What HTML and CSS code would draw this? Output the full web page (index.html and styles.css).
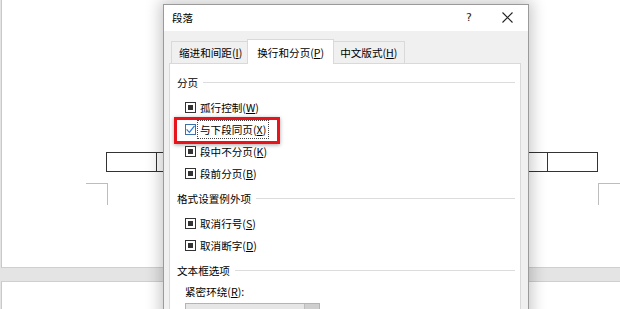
FILE: index.html
```html
<!DOCTYPE html>
<html lang="zh-CN">
<head>
<meta charset="utf-8">
<title>段落</title>
<link rel="stylesheet" href="styles.css">
</head>
<body>
<div class="desk">
  <div class="page page-one">
    <div class="doc-table">
      <div class="cell cell-a"></div>
      <div class="cell cell-b"></div>
      <div class="cell cell-c"></div>
    </div>
    <span class="crop crop-left"></span>
    <span class="crop crop-right"></span>
  </div>
  <div class="page-gap"></div>
  <div class="page page-two"></div>

  <div class="dialog">
    <div class="titlebar">
      <span class="title">段落</span>
      <span class="help">?</span>
      <span class="close">
        <svg width="11" height="11" viewBox="0 0 11 11"><path d="M0.5 0.5 L10.5 10.5 M10.5 0.5 L0.5 10.5" stroke="#222" stroke-width="1.1" fill="none"/></svg>
      </span>
    </div>
    <div class="dbody">
      <div class="tabs">
        <div class="tab">缩进和间距(<u>I</u>)</div>
        <div class="tab active">换行和分页(<u>P</u>)</div>
        <div class="tab">中文版式(<u>H</u>)</div>
      </div>
      <div class="panel">
        <div class="group-title"><span>分页</span><i class="rule"></i></div>
        <div class="row"><span class="cb mixed"></span><span class="lbl">孤行控制(<u>W</u>)</span></div>
        <div class="row checked-row">
          <span class="cb checked">
            <svg width="9" height="9" viewBox="0 0 9 9"><path d="M0.6 4.4 L3.4 7.3 L8.5 0.9" stroke="#2a78d4" stroke-width="1.2" fill="none"/></svg>
          </span>
          <span class="lbl focus">与下段同页(<u>X</u>)</span>
          <span class="mark"></span>
        </div>
        <div class="row"><span class="cb mixed"></span><span class="lbl">段中不分页(<u>K</u>)</span></div>
        <div class="row"><span class="cb mixed"></span><span class="lbl">段前分页(<u>B</u>)</span></div>

        <div class="group-title next"><span>格式设置例外项</span><i class="rule"></i></div>
        <div class="row"><span class="cb mixed"></span><span class="lbl">取消行号(<u>S</u>)</span></div>
        <div class="row"><span class="cb mixed"></span><span class="lbl">取消断字(<u>D</u>)</span></div>

        <div class="group-title next"><span>文本框选项</span><i class="rule"></i></div>
        <div class="field-label">紧密环绕(<u>R</u>):</div>
        <div class="combo"><span class="combo-text"></span><span class="combo-btn"></span></div>
      </div>
    </div>
  </div>
</div>
</body>
</html>
```

FILE: styles.css
```css
* { box-sizing: border-box; }
html, body { margin: 0; padding: 0; }
body {
  width: 620px;
  height: 309px;
  overflow: hidden;
  background: #e4e4e4;
  font-family: "Noto Sans CJK SC", "Noto Sans", sans-serif;
  font-size: 10.6px;
  color: #000;
}
.desk {
  position: relative;
  width: 620px;
  height: 309px;
}
.page {
  background: #fff;
  margin-left: 1px;
  border-left: 1px solid #c9c9c9;
}
.page-one {
  position: relative;
  height: 268px;
  border-bottom: 1px solid #cfcfcf;
  padding-top: 152px;
}
.page-gap { height: 13px; }
.page-two {
  height: 28px;
  border-top: 1px solid #cfcfcf;
}
.doc-table {
  display: flex;
  margin-left: 104px;
  width: 492px;
  height: 20px;
  border: 1px solid #333;
}
.cell { height: 100%; }
.cell-a { width: 50px; border-right: 1px solid #333; }
.cell-b { flex: 1; border-right: 1px solid #333; }
.cell-c { width: 49px; }
.crop {
  position: absolute;
  top: 183px;
  width: 22px;
  height: 22px;
  border-top: 1px solid #bdbdbd;
}
.crop-left { left: 84px; border-right: 1px solid #bdbdbd; }
.crop-right { left: 596px; border-left: 1px solid #bdbdbd; }

.dialog {
  position: absolute;
  left: 163px;
  top: 4px;
  width: 366px;
  height: 320px;
  background: #f0f0f0;
  border: 1px solid #9a9a9a;
  box-shadow: 0 0 14px 3px rgba(0, 0, 0, 0.22);
}
.titlebar {
  display: flex;
  align-items: center;
  height: 26px;
  background: #fff;
  padding-left: 8px;
  padding-bottom: 1px;
}
.title { flex: 1; }
.help {
  width: 14px;
  text-align: center;
  font-family: "DejaVu Sans", sans-serif;
  font-size: 11px;
  color: #222;
  margin-right: 26px;
}
.close {
  display: flex;
  width: 11px;
  height: 11px;
  margin-right: 15px;
}
.dbody {
  padding: 8px 7px 0 5px;
}
.tabs {
  display: flex;
  align-items: flex-end;
  height: 24px;
  padding-left: 2px;
  position: relative;
  z-index: 1;
}
.tab {
  height: 22px;
  line-height: 21px;
  padding: 0 7px;
  border: 1px solid #d9d9d9;
  border-bottom: none;
  background: #f0f0f0;
  white-space: nowrap;
}
.tab + .tab { margin-left: -1px; }
.tab.active {
  height: 25px;
  margin: 0 -2px -1px -3px;
  padding: 0 9px;
  line-height: 26px;
  background: #fff;
  position: relative;
  z-index: 2;
}
.tab.active + .tab { margin-left: 0; }
.panel {
  background: #fff;
  border: 1px solid #d9d9d9;
  height: 260px;
  padding: 10px 5px 0 7px;
}
.group-title {
  display: flex;
  align-items: center;
  height: 16px;
  margin-bottom: 6px;
}
.group-title.next { margin-top: 6px; }
.rule {
  flex: 1;
  height: 1px;
  background: #dcdcdc;
  margin-left: 5px;
}
.row {
  position: relative;
  display: flex;
  align-items: center;
  height: 22px;
  padding-left: 8px;
}
.cb {
  width: 11px;
  height: 11px;
  border: 1px solid #333;
  background: #fff;
  margin-right: 4px;
  display: flex;
  align-items: center;
  justify-content: center;
  flex: none;
}
.cb.mixed::after {
  content: "";
  width: 5px;
  height: 5px;
  background: #333;
}
.cb.checked { border-color: #3d6fa8; }
.lbl { white-space: nowrap; }
.lbl.focus {
  outline: 1px dotted #444;
  outline-offset: 1px;
  margin-left: -1px;
  padding: 0 1px;
}
.mark {
  position: absolute;
  left: -3px;
  top: -1px;
  width: 106px;
  height: 27px;
  border: 3px solid #e8141c;
  box-shadow: 0 1px 4px rgba(0, 0, 0, 0.35);
  pointer-events: none;
}
.field-label {
  height: 16px;
  line-height: 16px;
  padding-left: 8px;
  margin-top: 6px;
}
.combo {
  display: flex;
  margin: 3px 0 0 8px;
  width: 135px;
  height: 20px;
  border: 1px solid #b4b4b4;
  background: #e6e6e6;
}
.combo-text { flex: 1; }
.combo-btn {
  width: 15px;
  background: #cfcfcf;
  border-left: 1px solid #bdbdbd;
}
```
